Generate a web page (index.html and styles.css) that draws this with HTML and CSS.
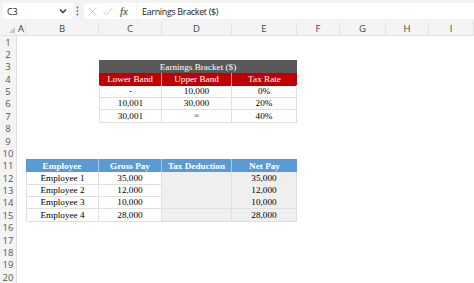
FILE: index.html
```html
<!DOCTYPE html>
<html>
<head>
<meta charset="utf-8">
<link rel="stylesheet" href="styles.css">
</head>
<body>
<div class="app">
  <div class="fbar">
    <div class="namebox">
      <span class="nb-text">C3</span>
      <svg class="chev" width="8" height="6" viewBox="0 0 8 6"><polyline points="1,1.5 4,4.5 7,1.5" fill="none" stroke="#333" stroke-width="1.4"/></svg>
    </div>
    <svg class="dots" width="3" height="10" viewBox="0 0 3 10"><circle cx="1.5" cy="1.5" r="0.9" fill="#666"/><circle cx="1.5" cy="5" r="0.9" fill="#666"/><circle cx="1.5" cy="8.5" r="0.9" fill="#666"/></svg>
    <div class="fbox">
      <div class="fbtns">
        <svg class="ico" width="9" height="9" viewBox="0 0 9 9"><path d="M0.5 0.5 L8.5 8.5 M8.5 0.5 L0.5 8.5" stroke="#c4c4c4" stroke-width="0.9" fill="none"/></svg>
        <svg class="ico" width="10" height="9" viewBox="0 0 10 9"><path d="M0.5 5 L3.5 8 L9.5 0.8" stroke="#c4c4c4" stroke-width="0.9" fill="none"/></svg>
        <span class="fx">fx</span>
      </div>
      <div class="finput">Earnings Bracket ($)</div>
    </div>
  </div>
  <div class="sheet">
    <div class="row hdr">
      <div class="corner"><span class="tri"></span></div>
      <div class="ch">A</div><div class="ch">B</div><div class="ch">C</div><div class="ch">D</div><div class="ch">E</div><div class="ch">F</div><div class="ch">G</div><div class="ch">H</div><div class="ch">I</div>
    </div>
    <div class="row"><div class="rn">1</div></div>
    <div class="row"><div class="rn">2</div></div>
    <div class="row"><div class="rn">3</div><div class="c cC span3 gray">Earnings Bracket ($)</div></div>
    <div class="row"><div class="rn">4</div><div class="c cC red">Lower Band</div><div class="c cD red">Upper Band</div><div class="c cE red last">Tax Rate</div></div>
    <div class="row"><div class="rn">5</div><div class="c cC d first">-</div><div class="c cD d">10,000</div><div class="c cE d">0%</div></div>
    <div class="row"><div class="rn">6</div><div class="c cC d first">10,001</div><div class="c cD d">30,000</div><div class="c cE d">20%</div></div>
    <div class="row"><div class="rn">7</div><div class="c cC d first">30,001</div><div class="c cD d inf">∞</div><div class="c cE d">40%</div></div>
    <div class="row"><div class="rn">8</div></div>
    <div class="row"><div class="rn">9</div></div>
    <div class="row"><div class="rn">10</div></div>
    <div class="row"><div class="rn">11</div><div class="c cB blue">Employee</div><div class="c cC blue">Gross Pay</div><div class="c cD blue">Tax Deduction</div><div class="c cE blue last">Net Pay</div></div>
    <div class="row"><div class="rn">12</div><div class="c cB d first">Employee 1</div><div class="c cC d">35,000</div><div class="c cD d shade"></div><div class="c cE d shade">35,000</div></div>
    <div class="row"><div class="rn">13</div><div class="c cB d first">Employee 2</div><div class="c cC d">12,000</div><div class="c cD d shade"></div><div class="c cE d shade">12,000</div></div>
    <div class="row"><div class="rn">14</div><div class="c cB d first">Employee 3</div><div class="c cC d">10,000</div><div class="c cD d shade"></div><div class="c cE d shade">10,000</div></div>
    <div class="row"><div class="rn">15</div><div class="c cB d first">Employee 4</div><div class="c cC d">28,000</div><div class="c cD d shade"></div><div class="c cE d shade">28,000</div></div>
    <div class="row"><div class="rn">16</div></div>
    <div class="row"><div class="rn">17</div></div>
    <div class="row"><div class="rn">18</div></div>
    <div class="row"><div class="rn">19</div></div>
    <div class="row"><div class="rn">20</div></div>
  </div>
</div>
</body>
</html>
```
FILE: styles.css
```css
* { box-sizing: border-box; }
html, body { margin: 0; padding: 0; background: #fff; overflow: hidden; }
body { width: 474px; height: 283px; font-family: "Open Sans", "Noto Sans", sans-serif; }

.app { width: 474px; height: 283px; display: flex; flex-direction: column; }

.fbar {
  height: 22px;
  background: #f3f3f3;
  display: flex;
  align-items: center;
  padding: 0 0 0 3px;
  flex: none;
}
.namebox {
  width: 70px;
  height: 16px;
  background: #fff;
  border-radius: 2px;
  display: flex;
  align-items: center;
  justify-content: space-between;
  padding: 0 6px 0 4px;
}
.nb-text { font-size: 9px; letter-spacing: -0.2px; color: #222; }
.chev { display: block; }
.dots { margin: 0 5px 0 3px; display: block; }
.fbox {
  flex: 1;
  height: 16px;
  display: flex;
  align-items: center;
  gap: 1px;
}
.fbtns {
  width: 52px;
  height: 16px;
  background: #fff;
  border-radius: 2px 0 0 2px;
  display: flex;
  align-items: center;
  gap: 6px;
  padding-left: 4px;
}
.ico { display: block; }
.fx {
  font-family: "Liberation Serif", serif;
  font-style: italic;
  font-size: 11px;
  color: #333;
  margin-left: 1px;
}
.finput {
  flex: 1;
  height: 16px;
  background: #fff;
  font-size: 9px;
  letter-spacing: -0.35px;
  color: #222;
  display: flex;
  align-items: center;
  padding-left: 5px;
}

.sheet { flex: 1; display: flex; flex-direction: column; }
.row {
  display: grid;
  grid-template-columns: 17px 9px 73px 63px 70px 65px 43px 46px 43px 45px;
  height: 12.375px;
  flex: none;
}
.row.hdr {
  height: 13.5px;
  background: #f4f4f4;
  border-bottom: 1px solid #e2e2e2;
}
.corner { position: relative; }
.tri {
  position: absolute;
  right: 2px;
  bottom: 2px;
  width: 0; height: 0;
  border-left: 6px solid transparent;
  border-bottom: 6px solid #c8c8c8;
}
.ch {
  font-size: 9.5px;
  color: #444;
  display: flex;
  align-items: center;
  justify-content: center;
  border-right: 1px solid #e4e4e4;
}
.rn {
  grid-column: 1;
  background: #f4f4f4;
  border-right: 1px solid #e2e2e2;
  font-size: 9.5px;
  color: #555;
  display: flex;
  align-items: center;
  justify-content: center;
}

.c {
  font-family: "Liberation Serif", serif;
  font-size: 9.2px;
  color: #000;
  display: flex;
  align-items: center;
  justify-content: center;
  white-space: nowrap;
}
.cB { grid-column: 3; }
.cC { grid-column: 4; }
.cD { grid-column: 5; }
.cE { grid-column: 6; }
.span3 { grid-column: 4 / span 3; }

.gray { background: #595959; color: #fff; }
.red { background: #c00000; color: #fff; border-right: 1px solid #e6a0a0; }
.blue { background: #5b9bd5; color: #fff; font-weight: bold; border-right: 1px solid #a9c9ea; }
.last { border-right: none; }
.d { border-right: 1px solid #e0e0e0; border-bottom: 1px solid #e0e0e0; }
.first { border-left: 1px solid #e0e0e0; }
.shade { background: #efefef; }
.inf { font-size: 8px; color: #555; }
```
